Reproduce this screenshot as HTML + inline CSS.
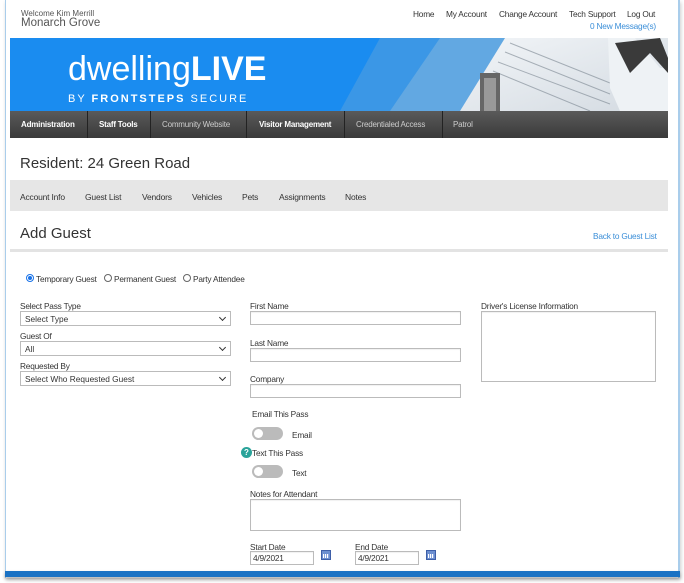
<!DOCTYPE html>
<html><head><meta charset="utf-8"><style>
*{box-sizing:border-box;margin:0;padding:0}
body{width:684px;height:583px;background:#fff;font-family:"Liberation Sans",Arial,sans-serif;color:#333;position:relative;overflow:hidden}
.a{position:absolute;white-space:nowrap}
.wrap{position:absolute;left:5px;top:0;width:675px;height:578px;border-left:1px solid #a9cdeb;border-right:2px solid #a9cdeb;box-shadow:1px 2px 4px rgba(0,0,0,.2)}
.bar{position:absolute;left:5px;top:571px;width:675px;height:6px;background:#1a72c4;box-shadow:0 2px 3px rgba(0,0,0,.3)}
.nav{position:absolute;left:10px;top:111px;width:658px;height:27px;background:linear-gradient(#5a5a5a,#3a3a3a)}
.nav span{position:absolute;top:9px;font-size:8px;color:#fff;font-weight:bold;letter-spacing:-.2px}
.nav span.g{color:#ccc;font-weight:normal}
.nav i{position:absolute;top:0;width:1px;height:27px;background:#222}
.sub{position:absolute;left:10px;top:180px;width:658px;height:31px;background:#e6e6e6}
.sub span{position:absolute;top:12px;font-size:8.5px;color:#333;letter-spacing:-.2px}
.lbl{font-size:8.3px;color:#333;letter-spacing:-.2px}
.inp{position:absolute;border:1px solid #bbb;background:#fff;height:14px;box-shadow:inset 0 1px 1px rgba(0,0,0,.06)}
.sel{position:absolute;border:1px solid #bbb;background:#fff;height:15px;font-size:8.3px;padding:2px 4px;color:#333}
.sel:after{content:"";position:absolute;right:5px;top:3px;width:4px;height:4px;border-right:1.3px solid #333;border-bottom:1.3px solid #333;transform:rotate(45deg)}
.tog{position:absolute;width:31px;height:13px;border-radius:7px;background:#bbb}
.tog:after{content:"";position:absolute;left:2px;top:2px;width:9px;height:9px;border-radius:50%;background:#fff}
.rad{position:absolute;width:8px;height:8px;border:1px solid #666;border-radius:50%;background:#fff}
.cal{position:absolute;width:10px;height:10px;background:#6c8fd0;border:1px solid #3e5fa8}
.cal:after{content:"";position:absolute;left:1px;top:3px;width:6px;height:4px;background:repeating-linear-gradient(90deg,#fff 0 1px,#8aa4dc 1px 2px)}
</style></head><body>
<div class="wrap"></div>
<div class="a" style="left:21px;top:9px;font-size:8px;color:#555">Welcome Kim Merrill</div>
<div class="a" style="left:21px;top:17px;font-size:11.5px;color:#555">Monarch Grove</div>
<div class="a lbl" style="left:413px;top:9px">Home</div>
<div class="a lbl" style="left:446px;top:9px">My Account</div>
<div class="a lbl" style="left:499px;top:9px">Change Account</div>
<div class="a lbl" style="left:569px;top:9px">Tech Support</div>
<div class="a lbl" style="left:627px;top:9px">Log Out</div>
<div class="a lbl" style="left:590px;top:21px;color:#3a8ed8">0 New Message(s)</div>

<svg class="a" style="left:10px;top:38px" width="658" height="73" viewBox="0 0 658 73">
<defs><linearGradient id="h" x1="0" y1="0" x2="1" y2="1"><stop offset="0" stop-color="#f2f5f8"/><stop offset="1" stop-color="#d3dae1"/></linearGradient></defs>
<rect width="658" height="73" fill="#1a8cf0"/>
<polygon points="370,0 460,0 420,73 330,73" fill="#3b97e6"/>
<polygon points="430,0 500,0 460,73 380,73" fill="#62a8e2"/>
<polygon points="495,0 658,0 658,73 450,73" fill="url(#h)"/>
<g stroke="#7a8590" stroke-width="1" opacity=".6">
<line x1="500" y1="5" x2="600" y2="45"/><line x1="495" y1="14" x2="600" y2="56"/><line x1="488" y1="24" x2="600" y2="66"/><line x1="483" y1="33" x2="580" y2="73"/>
</g>
<polygon points="598,0 625,0 650,30 658,30 658,73 610,73 600,50" fill="#eef2f5"/>
<polygon points="605,5 650,0 658,20 658,35 640,15 620,35" fill="#3a3a3a"/>
<rect x="470" y="35" width="20" height="38" fill="#666"/>
<rect x="474" y="40" width="12" height="33" fill="#999"/>
<text x="58" y="42" font-family="Liberation Sans,sans-serif" font-size="34" fill="#fff">dwelling<tspan font-weight="bold">LIVE</tspan></text>
<text x="58" y="64" font-family="Liberation Sans,sans-serif" font-size="11" fill="#fff" letter-spacing="2">BY <tspan font-weight="bold">FRONTSTEPS</tspan> SECURE</text>
</svg>
<div class="nav">
<span style="left:11px">Administration</span><i style="left:77px"></i>
<span style="left:89px">Staff Tools</span><i style="left:140px"></i>
<span class="g" style="left:152px">Community Website</span><i style="left:236px"></i>
<span style="left:249px">Visitor Management</span><i style="left:334px"></i>
<span class="g" style="left:346px">Credentialed Access</span><i style="left:432px"></i>
<span class="g" style="left:443px">Patrol</span>
</div>

<div class="a" style="left:20px;top:155px;font-size:15px;color:#333">Resident: 24 Green Road</div>
<div class="sub">
<span style="left:10px">Account Info</span><span style="left:75px">Guest List</span><span style="left:132px">Vendors</span><span style="left:182px">Vehicles</span><span style="left:232px">Pets</span><span style="left:269px">Assignments</span><span style="left:335px">Notes</span>
</div>
<div class="a" style="left:20px;top:225px;font-size:15px;color:#333">Add Guest</div>
<div class="a lbl" style="left:593px;top:231px;color:#3a8ed8">Back to Guest List</div>
<div class="a" style="left:10px;top:249px;width:658px;height:3px;background:#e3e3e3"></div>

<div class="rad" style="left:26px;top:274px;border-color:#1a73e8"><div style="position:absolute;left:1px;top:1px;width:4px;height:4px;border-radius:50%;background:#1a73e8"></div></div>
<div class="a lbl" style="left:36px;top:274px">Temporary Guest</div>
<div class="rad" style="left:104px;top:274px"></div>
<div class="a lbl" style="left:114px;top:274px">Permanent Guest</div>
<div class="rad" style="left:183px;top:274px"></div>
<div class="a lbl" style="left:193px;top:274px">Party Attendee</div>

<div class="a lbl" style="left:20px;top:301px">Select Pass Type</div>
<div class="sel" style="left:20px;top:311px;width:211px">Select Type</div>
<div class="a lbl" style="left:20px;top:331px">Guest Of</div>
<div class="sel" style="left:20px;top:341px;width:211px">All</div>
<div class="a lbl" style="left:20px;top:361px">Requested By</div>
<div class="sel" style="left:20px;top:371px;width:211px">Select Who Requested Guest</div>

<div class="a lbl" style="left:250px;top:301px">First Name</div>
<div class="inp" style="left:250px;top:311px;width:211px"></div>
<div class="a lbl" style="left:250px;top:338px">Last Name</div>
<div class="inp" style="left:250px;top:348px;width:211px"></div>
<div class="a lbl" style="left:250px;top:374px">Company</div>
<div class="inp" style="left:250px;top:384px;width:211px"></div>
<div class="a lbl" style="left:252px;top:409px">Email This Pass</div>
<div class="tog" style="left:252px;top:427px"></div>
<div class="a lbl" style="left:292px;top:430px">Email</div>
<div class="a" style="left:241px;top:447px;width:11px;height:11px;border-radius:50%;background:#2aa39a;color:#fff;font-size:8px;font-weight:bold;text-align:center;line-height:11px">?</div>
<div class="a lbl" style="left:252px;top:448px">Text This Pass</div>
<div class="tog" style="left:252px;top:465px"></div>
<div class="a lbl" style="left:292px;top:468px">Text</div>
<div class="a lbl" style="left:250px;top:489px">Notes for Attendant</div>
<div class="inp" style="left:250px;top:499px;width:211px;height:32px"></div>
<div class="a lbl" style="left:250px;top:542px">Start Date</div>
<div class="inp lbl" style="left:250px;top:551px;width:64px;padding:1px 2px">4/9/2021</div>
<div class="cal" style="left:321px;top:550px"></div>
<div class="a lbl" style="left:355px;top:542px">End Date</div>
<div class="inp lbl" style="left:355px;top:551px;width:64px;padding:1px 2px">4/9/2021</div>
<div class="cal" style="left:426px;top:550px"></div>

<div class="a lbl" style="left:481px;top:301px">Driver's License Information</div>
<div class="inp" style="left:481px;top:311px;width:175px;height:71px"></div>
<div class="bar"></div>
</body></html>
